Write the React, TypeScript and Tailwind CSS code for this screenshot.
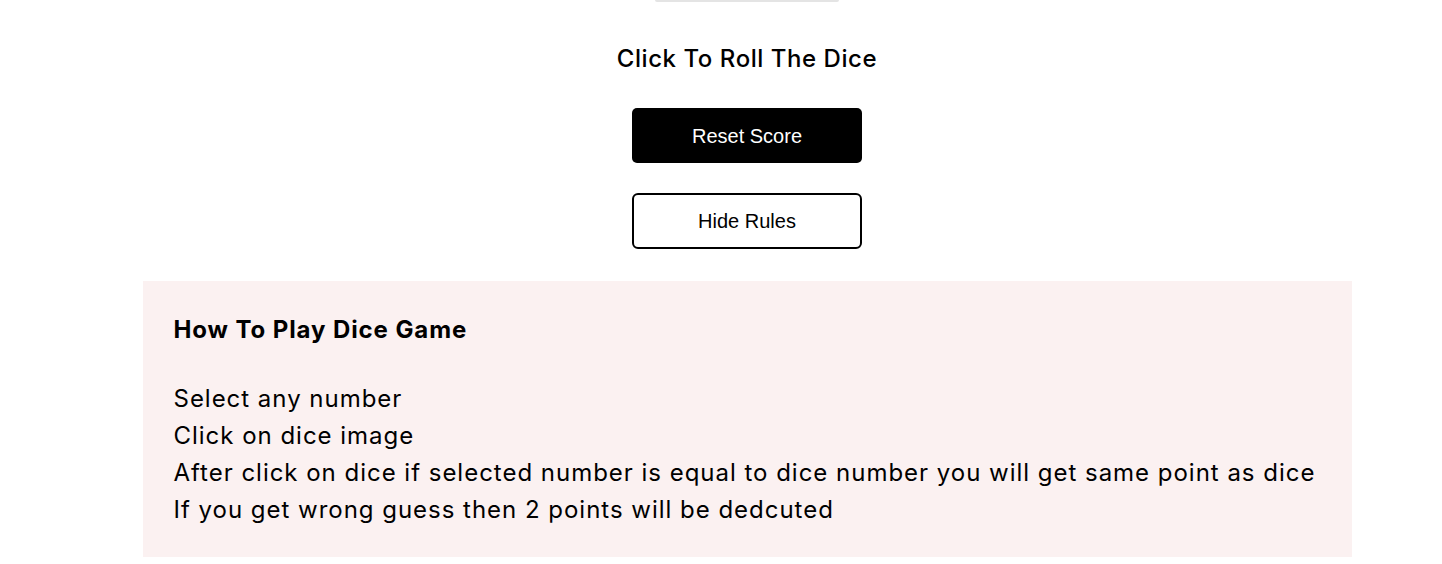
import React from 'react';

const rules = [
  'Select any number',
  'Click on dice image',
  'After click on dice if selected number is equal to dice number you will get same point as dice',
  'If you get wrong guess then 2 points will be dedcuted',
];

const App = () => {
  return (
    <div className="min-h-[564px] bg-white pl-[52px] text-black flex flex-col items-center" style={{ fontFamily: 'Inter, "Noto Sans", sans-serif' }}>
      {/* bottom edge of the dice image */}
      <div className="w-[184px] h-[2px] rounded-b-full bg-[#e4e4e4]" />

      <p className="mt-[39px] text-[24px] leading-[36px] font-medium tracking-[0.55px]">Click To Roll The Dice</p>

      <button
        className="mt-[31px] w-[230px] h-[55px] rounded-[5px] bg-black text-white text-[20px]"
        style={{ fontFamily: '"Liberation Sans", Arial, sans-serif' }}
      >
        Reset Score
      </button>

      <button
        className="mt-[30px] w-[230px] h-[56px] rounded-[6px] border-2 border-black bg-white text-black text-[20px]"
        style={{ fontFamily: '"Liberation Sans", Arial, sans-serif' }}
      >
        Hide Rules
      </button>

      <div className="mt-[32px] w-[1209px] bg-[#fbf1f1] px-[31px] pt-[31px] pb-[29px]">
        <h2 className="text-[24px] leading-[36px] font-bold tracking-[0.9px]">How To Play Dice Game</h2>
        <div className="mt-[32px]">
          {rules.map((r) => (
            <p key={r} className="text-[24px] leading-[37px] tracking-[0.98px] whitespace-nowrap">{r}</p>
          ))}
        </div>
      </div>
    </div>
  );
};

export default App;
